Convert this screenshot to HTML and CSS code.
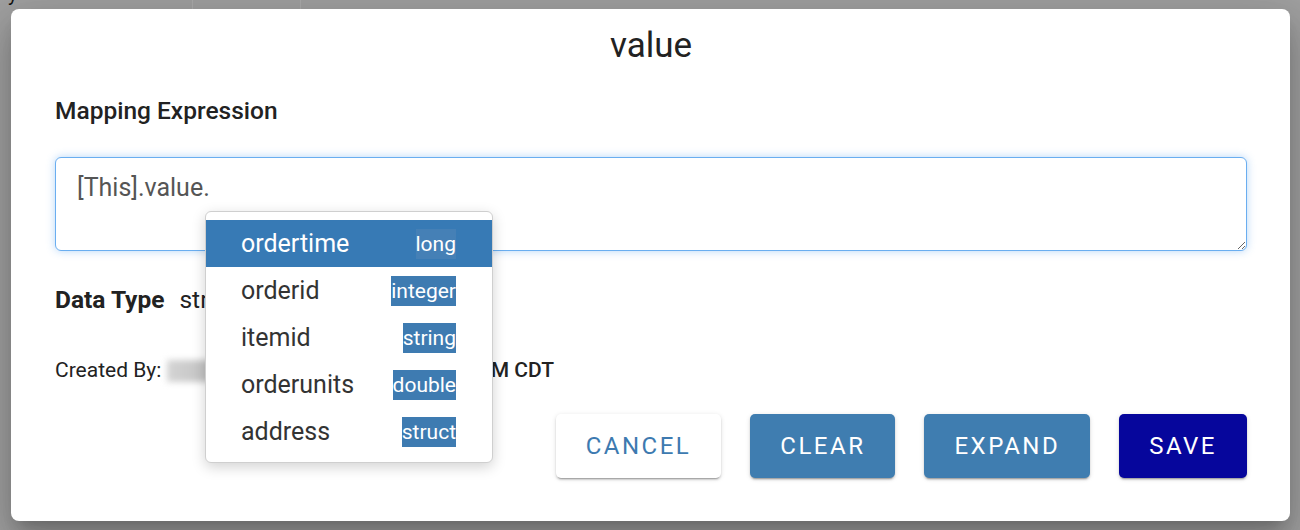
FILE: index.html
```html
<!DOCTYPE html>
<html lang="en">
<head>
    <meta charset="UTF-8">
    <title>Mapping Expression</title>
    <link rel="stylesheet" href="styles.css">
</head>
<body>
    <div class="page">
        <div class="table-head">
            <div class="cell first"><span class="cut">y</span></div>
            <div class="cell second"></div>
            <div class="cell rest"></div>
        </div>
    </div>

    <div class="modal">
        <h1 class="modal-title">value</h1>

        <label class="field-label" for="expr">Mapping Expression</label>
        <div class="expr-wrap">
            <textarea id="expr" class="expr">[This].value.</textarea>
            <ul class="suggest">
                <li class="active"><span class="name">ordertime</span><span class="type">long</span></li>
                <li><span class="name">orderid</span><span class="type">integer</span></li>
                <li><span class="name">itemid</span><span class="type">string</span></li>
                <li><span class="name">orderunits</span><span class="type">double</span></li>
                <li><span class="name">address</span><span class="type">struct</span></li>
            </ul>
        </div>

        <div class="data-type">
            <span class="dt-label">Data Type</span>
            <span class="dt-value">string</span>
        </div>

        <p class="created">Created By: <span class="redacted"></span> on 05/10/2023 10:42 A<b>M CDT</b></p>

        <div class="actions">
            <button class="btn cancel">Cancel</button>
            <button class="btn primary">Clear</button>
            <button class="btn primary">Expand</button>
            <button class="btn save">Save</button>
        </div>
    </div>
</body>
</html>
```

FILE: styles.css
```css
body {
    margin: 0;
    background-color: #a0a0a0;
    font-family: Roboto, "Noto Sans", sans-serif;
    color: #222;
    height: 530px;
    overflow: hidden;
}

.table-head {
    display: flex;
    height: 9px;
}

.table-head .cell {
    border-right: 1px solid #ababab;
    position: relative;
    overflow: hidden;
}

.table-head .first {
    width: 192px;
}

.table-head .second {
    width: 107px;
}

.table-head .rest {
    flex: 1;
    border-right: none;
}

.cut {
    position: absolute;
    left: 8px;
    top: -18px;
    font-size: 20px;
    color: #111;
}

.modal {
    position: absolute;
    left: 11px;
    top: 9px;
    width: 1279px;
    height: 512px;
    box-sizing: border-box;
    padding: 0 43px 0 44px;
    background: #fff;
    border-radius: 8px;
    box-shadow: 0 11px 15px -7px rgba(0, 0, 0, 0.2), 0 24px 38px 3px rgba(0, 0, 0, 0.14), 0 9px 46px 8px rgba(0, 0, 0, 0.12);
}

.modal-title {
    margin: 0;
    padding-top: 16px;
    height: 42px;
    text-align: center;
    font-size: 35px;
    font-weight: 400;
    line-height: 42px;
    color: #222;
}

.field-label {
    display: block;
    margin-top: 29px;
    font-size: 24.5px;
    font-weight: 500;
    line-height: 30px;
}

.expr-wrap {
    position: relative;
    margin-top: 31px;
}

.expr {
    display: block;
    width: 100%;
    height: 94px;
    box-sizing: border-box;
    padding: 15px 21px 11px;
    border: 1px solid #6aaef0;
    border-radius: 6px;
    box-shadow: 0 0 8px rgba(90, 165, 240, 0.45);
    font-family: Roboto, sans-serif;
    font-size: 25px;
    line-height: 30px;
    color: #555;
    outline: none;
}

.suggest {
    position: absolute;
    left: 150px;
    top: 54px;
    width: 286px;
    margin: 0;
    padding: 8px 0 7px;
    list-style: none;
    background: #fff;
    border: 1px solid #cfcfcf;
    border-radius: 6px;
    box-shadow: 0 4px 14px rgba(0, 0, 0, 0.18);
    z-index: 2;
}

.suggest li {
    display: flex;
    justify-content: space-between;
    align-items: center;
    height: 47px;
    padding: 0 36px 0 35px;
    font-size: 25px;
    color: #333;
}

.suggest li.active {
    background: #377ab5;
    color: #fff;
}

.suggest .type {
    background: #3e7bb1;
    color: #fff;
    font-size: 21px;
    line-height: 30px;
}

.suggest li.active .type {
    background: #4580b6;
}

.data-type {
    margin-top: 34px;
    display: flex;
    align-items: baseline;
    gap: 15px;
    font-size: 24.5px;
    line-height: 30px;
}

.dt-label {
    font-weight: 700;
}

.created {
    margin: 43px 0 0;
    font-size: 21px;
    line-height: 24px;
}

.created b {
    font-weight: 500;
}

.redacted {
    display: inline-block;
    width: 102px;
    height: 22px;
    vertical-align: middle;
    background: linear-gradient(90deg, #d4d4d4, #a8a8a8);
    filter: blur(3px);
}

.actions {
    display: flex;
    justify-content: flex-end;
    gap: 29px;
    margin-top: 32px;
}

.btn {
    height: 64px;
    padding: 0 30px;
    border: none;
    border-radius: 5px;
    font-family: Roboto, sans-serif;
    font-size: 24px;
    letter-spacing: 2.5px;
    text-transform: uppercase;
    color: #fff;
    box-shadow: 0 3px 1px -2px rgba(0, 0, 0, 0.2), 0 2px 2px 0 rgba(0, 0, 0, 0.14), 0 1px 5px 0 rgba(0, 0, 0, 0.12);
}

.btn.cancel {
    background: #fff;
    color: #3d7ab0;
}

.btn.primary {
    background: #3f7db0;
}

.btn.save {
    background: #06069c;
}
```
